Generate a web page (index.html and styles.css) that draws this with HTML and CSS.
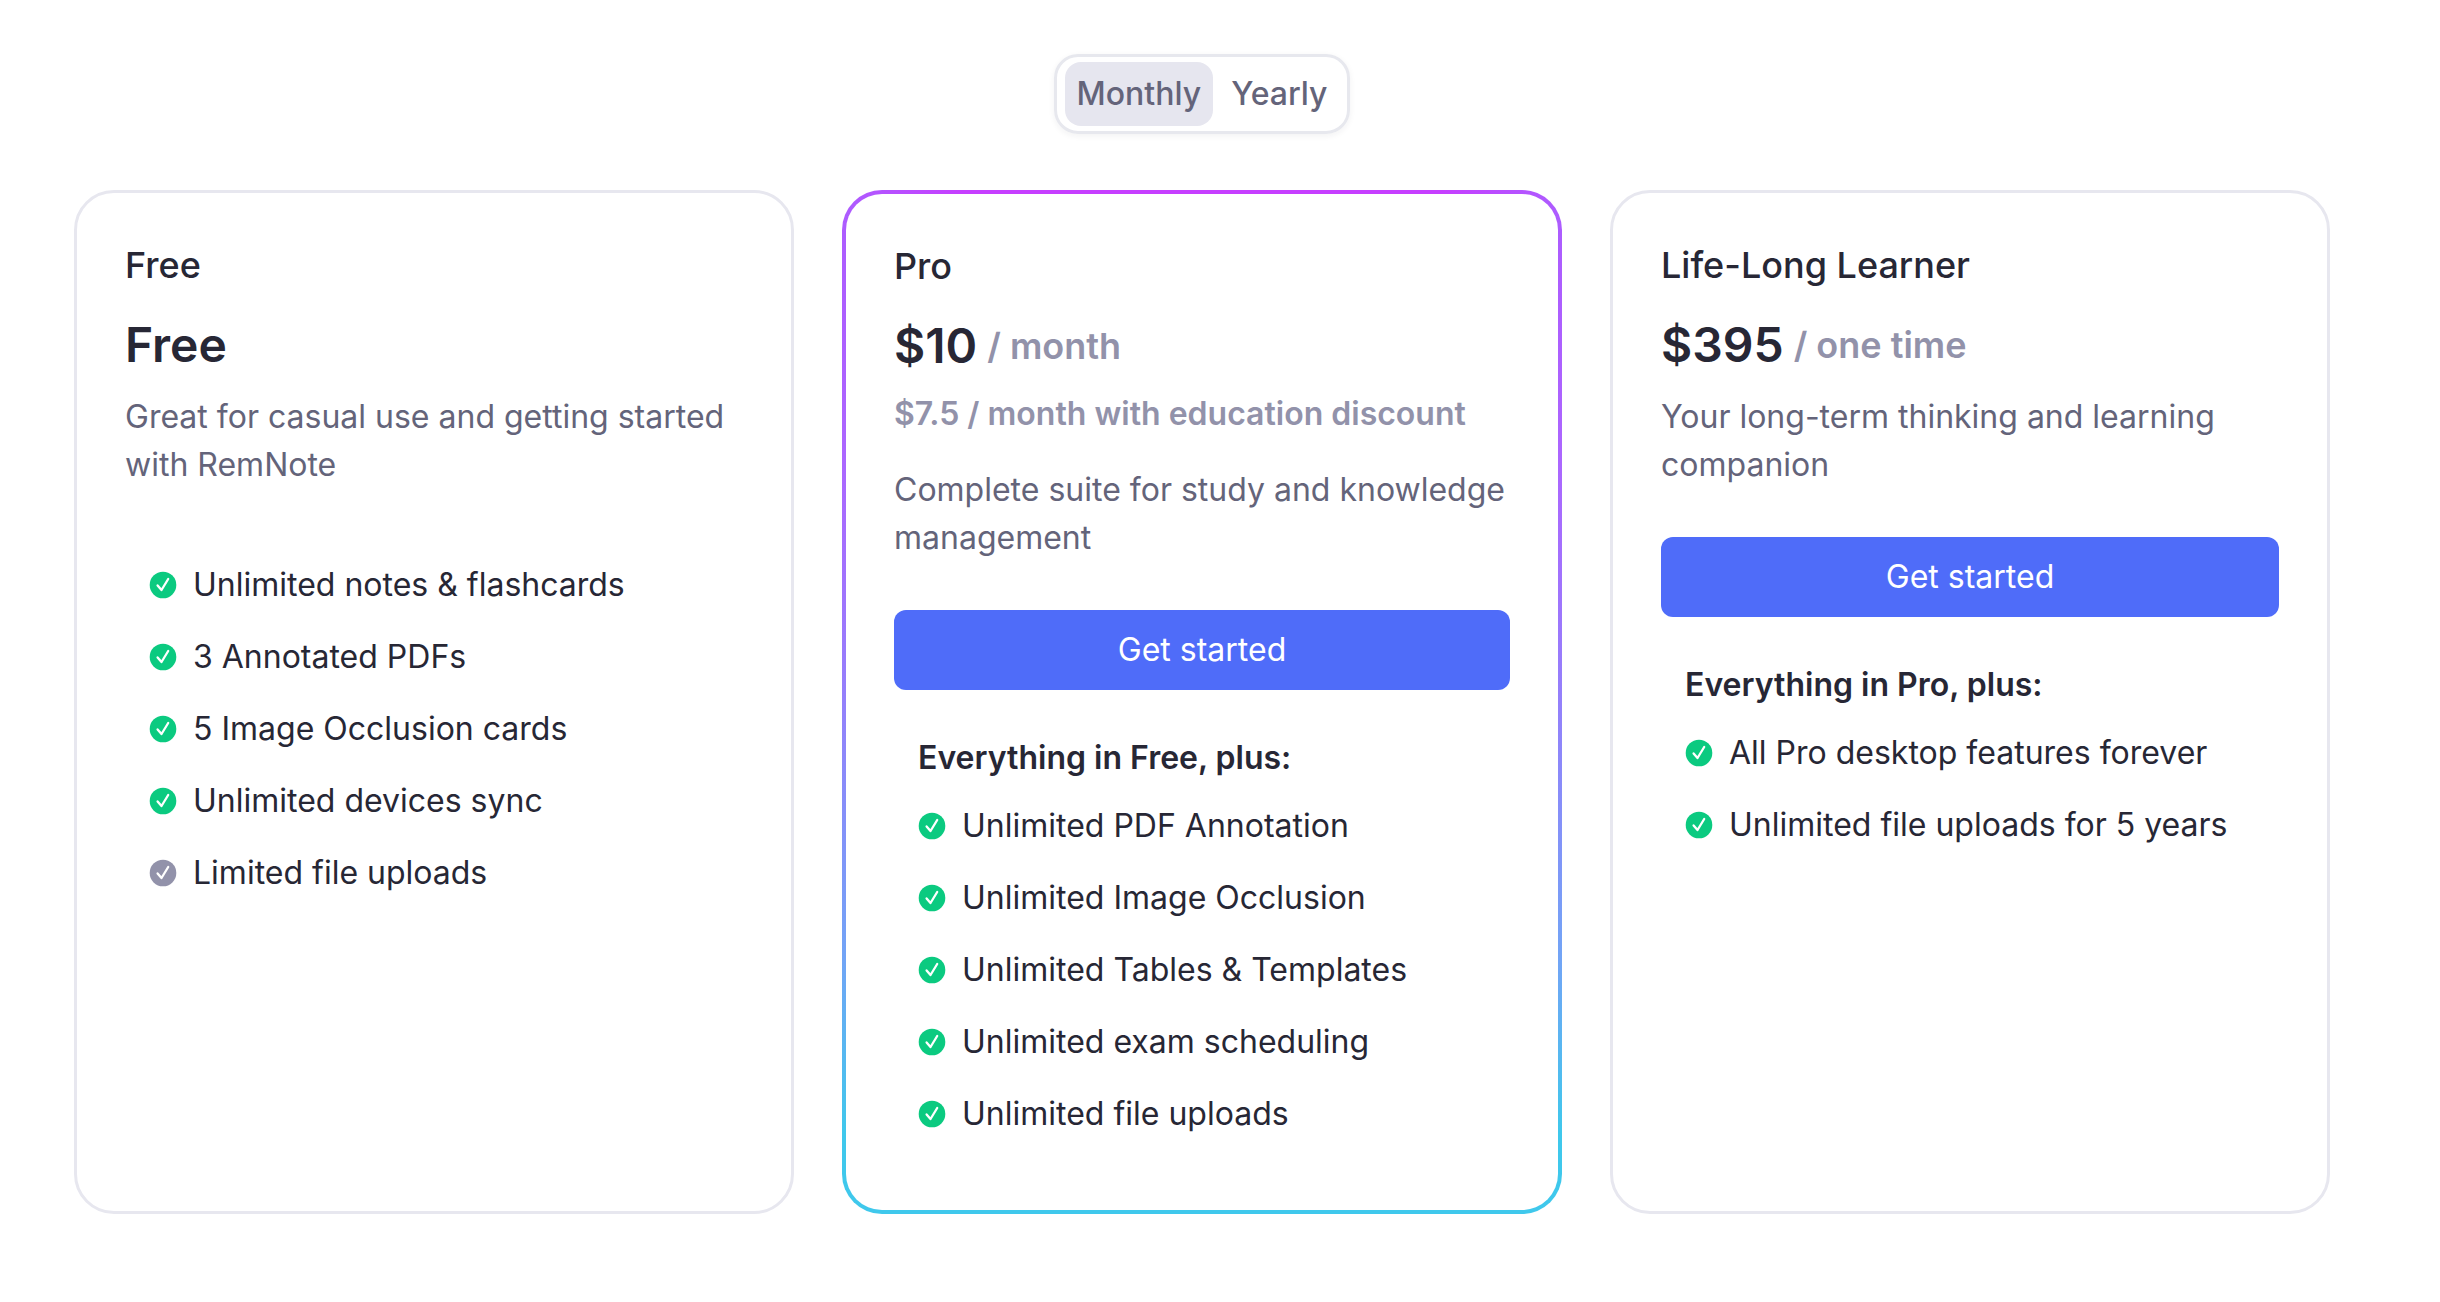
FILE: index.html
```html
<!DOCTYPE html>
<html lang="en">
<head>
    <meta charset="UTF-8">
    <meta name="viewport" content="width=device-width, initial-scale=1.0">
    <title>RemNote Pricing</title>
    <link rel="stylesheet" href="styles.css">
</head>
<body>
    <svg class="sprite" aria-hidden="true">
        <symbol id="check" viewBox="0 0 28 28">
            <circle cx="14" cy="14" r="13.3" fill="currentColor"/>
            <path d="M8.6 14.4l3.9 4.6 6.7-11" fill="none" stroke="#fff" stroke-width="2.3" stroke-linecap="round" stroke-linejoin="round"/>
        </symbol>
    </svg>
    <main class="pricing">
        <div class="toggle">
            <button type="button" class="toggle-option active" aria-pressed="true">Monthly</button>
            <button type="button" class="toggle-option" aria-pressed="false">Yearly</button>
        </div>
        <div class="plans">
            <section class="plan">
                <h2 class="name">Free</h2>
                <p class="price">Free</p>
                <p class="description">Great for casual use and getting started with RemNote</p>
                <div class="features features-free">
                    <ul class="list">
                        <li><svg class="check"><use href="#check"/></svg>Unlimited notes &amp; flashcards</li>
                        <li><svg class="check"><use href="#check"/></svg>3 Annotated PDFs</li>
                        <li><svg class="check"><use href="#check"/></svg>5 Image Occlusion cards</li>
                        <li><svg class="check"><use href="#check"/></svg>Unlimited devices sync</li>
                        <li><svg class="check limited"><use href="#check"/></svg>Limited file uploads</li>
                    </ul>
                </div>
            </section>
            <section class="plan plan-pro">
                <h2 class="name">Pro</h2>
                <p class="price">$10 <span class="period">/ month</span></p>
                <p class="discount">$7.5 / month with education discount</p>
                <p class="description">Complete suite for study and knowledge management</p>
                <button type="button" class="start">Get started</button>
                <div class="features">
                    <h3 class="includes">Everything in Free, plus:</h3>
                    <ul class="list">
                        <li><svg class="check"><use href="#check"/></svg>Unlimited PDF Annotation</li>
                        <li><svg class="check"><use href="#check"/></svg>Unlimited Image Occlusion</li>
                        <li><svg class="check"><use href="#check"/></svg>Unlimited Tables &amp; Templates</li>
                        <li><svg class="check"><use href="#check"/></svg>Unlimited exam scheduling</li>
                        <li><svg class="check"><use href="#check"/></svg>Unlimited file uploads</li>
                    </ul>
                </div>
            </section>
            <section class="plan">
                <h2 class="name">Life-Long Learner</h2>
                <p class="price">$395 <span class="period">/ one time</span></p>
                <p class="description">Your long-term thinking and learning companion</p>
                <button type="button" class="start">Get started</button>
                <div class="features">
                    <h3 class="includes">Everything in Pro, plus:</h3>
                    <ul class="list">
                        <li><svg class="check"><use href="#check"/></svg>All Pro desktop features forever</li>
                        <li><svg class="check"><use href="#check"/></svg>Unlimited file uploads for 5 years</li>
                    </ul>
                </div>
            </section>
        </div>
    </main>
</body>
</html>
```
FILE: styles.css
```css
* {
    box-sizing: border-box;
    margin: 0;
    padding: 0;
}
body {
    background: white;
    color: #272735;
    font-family: Inter, sans-serif;
    font-size: 32px;
    line-height: 48px;
}
button {
    font: inherit;
    border: none;
    cursor: pointer;
}
.sprite {
    display: none;
}
.pricing {
    display: flex;
    flex-direction: column;
    align-items: center;
    gap: 56px;
    padding: 54px 110px 88px 74px;
}
.toggle {
    display: flex;
    gap: 6px;
    padding: 5px 8px;
    border: 3px solid #e7e8ee;
    border-radius: 24px;
    box-shadow: 0 2px 6px rgba(39, 39, 53, 0.06);
}
.toggle-option {
    padding: 8px 12px;
    border-radius: 16px;
    background: none;
    color: #64647a;
    font-weight: 500;
}
.toggle-option.active {
    background: #e6e6ef;
}
.plans {
    display: grid;
    grid-template-columns: repeat(3, 1fr);
    gap: 48px;
    width: 100%;
}
.plan {
    padding: 48px;
    border: 3px solid #e7e7ef;
    border-radius: 40px;
}
/* white fill with a gradient showing through the border */
.plan-pro {
    border: 4px solid transparent;
    background: linear-gradient(white, white) padding-box,
        radial-gradient(circle at top, #c63eff 22%, #ad5cff 33%, #ac66ff 41%, #9381fb 58%, #72a4f6 78%, #3fc8ec 93%) border-box;
}
.name {
    font-size: 36px;
    font-weight: 500;
    line-height: 48px;
}
.price {
    display: flex;
    align-items: center;
    gap: 10px;
    margin: 24px 0 16px;
    font-size: 48px;
    font-weight: 600;
    line-height: 64px;
}
.period {
    color: #9292aa;
    font-size: 36px;
}
.discount {
    margin: -4px 0 28px;
    color: #9292aa;
    font-weight: 600;
}
.description {
    color: #64647a;
}
.start {
    width: 100%;
    height: 80px;
    margin-top: 48px;
    border-radius: 12px;
    background: #4f6cf9;
    color: white;
}
.features {
    padding: 44px 24px 12px;
}
.features-free {
    padding-top: 60px;
}
.includes {
    margin-bottom: 8px;
    font-size: 32px;
    font-weight: 600;
}
.list {
    list-style: none;
}
.list li {
    display: flex;
    align-items: center;
    gap: 16px;
    padding: 12px 0;
}
.check {
    flex: none;
    width: 28px;
    height: 28px;
    color: #0bca80;
}
.check.limited {
    color: #9292aa;
}
```
